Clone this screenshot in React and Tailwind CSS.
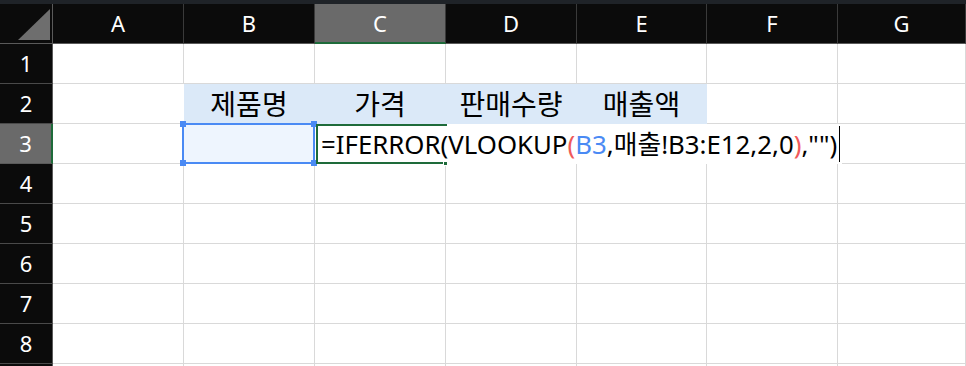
import React from "react";

const cols = [
  { l: "A", w: "w-[131px]" },
  { l: "B", w: "w-[131px]" },
  { l: "C", w: "w-[131px]" },
  { l: "D", w: "w-[131px]" },
  { l: "E", w: "w-[130px]" },
  { l: "F", w: "w-[131px]" },
  { l: "G", w: "flex-1" },
];

const font = { fontFamily: '"Noto Sans", "Noto Sans CJK KR", sans-serif' };

function RowHeader({ n, active }) {
  return (
    <div
      className={
        "w-[53px] shrink-0 flex items-center justify-center text-[22px] text-white border-b " +
        (active
          ? "bg-[#6a6a6a] border-r-2 border-r-[#1e6b3a] border-b-[#5a5a5a]"
          : "bg-[#0b0b0b] border-r border-r-[#5a5a5a] border-b-[#4a4a4a]")
      }
    >
      {n}
    </div>
  );
}

function Handle({ className }) {
  return <div className={"absolute w-[6px] h-[6px] bg-[#4a8af4] " + className} />;
}

export default function App() {
  const fill = "bg-[#dbe9f8] border-r border-b border-[#dbe9f8]";
  const plain = "bg-white border-r border-b border-[#d9d9d9]";
  return (
    <div className="w-[966px] h-[366px] overflow-hidden bg-white" style={font}>
      <div className="h-[4px] bg-[#1f2328]" />
      {/* header */}
      <div className="flex h-[40px]">
        <div className="w-[53px] shrink-0 bg-[#0b0b0b] border-r border-b border-[#5a5a5a] relative">
          <svg className="absolute left-0 top-0" width="52" height="39" viewBox="0 0 52 39">
            <polygon points="18,36 50,36 50,5" fill="#6e6e6e" />
          </svg>
        </div>
        {cols.map((c) => (
          <div
            key={c.l}
            className={
              c.w +
              " shrink-0 flex items-center justify-center text-[22px] text-white " +
              (c.l === "C"
                ? "bg-[#6a6a6a] border-r border-r-[#3a3a3a] border-b-2 border-b-[#1e6b3a]"
                : "bg-[#0b0b0b] border-r border-r-[#3a3a3a] border-b border-b-[#5a5a5a]")
            }
          >
            {c.l}
          </div>
        ))}
      </div>
      {/* row 1 */}
      <div className="flex h-[40px]">
        <RowHeader n="1" />
        {cols.map((c) => (
          <div key={c.l} className={c.w + " shrink-0 " + plain} />
        ))}
      </div>
      {/* row 2 */}
      <div className="flex h-[40px] text-[28px] text-black">
        <RowHeader n="2" />
        <div className={"w-[131px] shrink-0 bg-white border-b border-[#d9d9d9]"} />
        {["제품명", "가격", "판매수량", "매출액"].map((t, i) => (
          <div
            key={t}
            className={(i === 3 ? "w-[130px]" : "w-[131px]") + " shrink-0 flex items-center justify-center pt-[1px] " + fill}
          >
            {t}
          </div>
        ))}
        <div className={"w-[131px] shrink-0 " + plain} />
        <div className={"flex-1 " + plain} />
      </div>
      {/* row 3 */}
      <div className="flex h-[40px] relative">
        <RowHeader n="3" active />
        <div className={"w-[130px] shrink-0 " + plain} />
        <div className="w-[131px] shrink-0 relative bg-[#eef5fe] border-b border-[#d9d9d9]">
          <div className="absolute left-[-1px] top-[-1px] right-[-1px] bottom-[-1px] border-2 border-[#4a8af4]" />
          <Handle className="left-[-3px] top-[-3px]" />
          <Handle className="right-[-3px] top-[-3px]" />
          <Handle className="left-[-3px] bottom-[-3px]" />
          <Handle className="right-[-3px] bottom-[-3px]" />
        </div>
        {cols.slice(2).map((c) => (
          <div key={c.l} className={c.w + " shrink-0 " + plain} />
        ))}
        {/* edit box */}
        <div className="absolute left-[316px] top-0 h-[40px] bg-white flex items-center pl-[5px] pr-[2px]">
          <div className="absolute left-0 top-0 bottom-0 w-[2px] bg-[#1e6b3a]" />
          <div className="absolute left-0 top-0 w-[131px] h-[2px] bg-[#1e6b3a]" />
          <div className="absolute left-0 bottom-0 w-[131px] h-[2px] bg-[#1e6b3a]" />
          <div className="absolute left-[127px] bottom-[-2px] w-[5px] h-[5px] bg-[#1e6b3a] border border-white" />
          <span className="text-[25.8px] text-black whitespace-nowrap leading-none pt-[2px]">
            =IFERROR(VLOOKUP<span className="text-[#f05a5a]">(</span>
            <span className="text-[#4a8af4]">B3</span>,매출!B3:E12,2,0
            <span className="text-[#f05a5a]">)</span>,"")
          </span>
          <div className="ml-[2px] self-stretch my-[2px] w-[1px] bg-black" />
        </div>
      </div>
      {[4, 5, 6, 7, 8, 9].map((n) => (
        <div key={n} className="flex h-[40px]">
          <RowHeader n={n === 9 ? "" : String(n)} />
          {cols.map((c) => (
            <div key={c.l} className={c.w + " shrink-0 " + plain} />
          ))}
        </div>
      ))}
    </div>
  );
}
